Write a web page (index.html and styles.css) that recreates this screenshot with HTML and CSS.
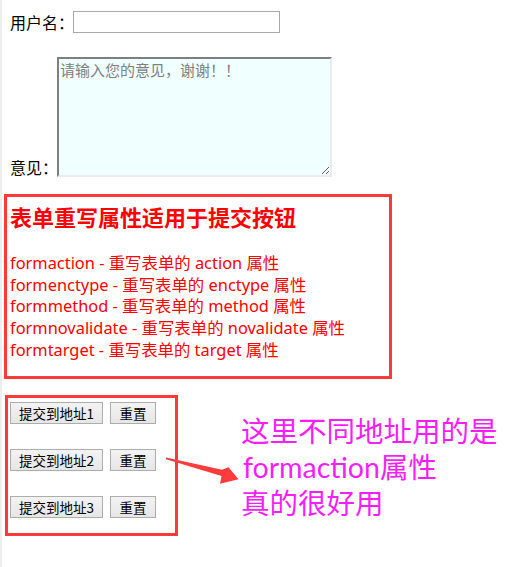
FILE: index.html
```html
<!DOCTYPE html>
<html lang="zh-CN">
<head>
<meta charset="utf-8">
<title>表单重写属性</title>
<link rel="stylesheet" href="styles.css">
</head>
<body>
<div class="page">
  <form class="form">
    <div class="row row-user">
      <label class="label label-user" for="user">用户名：</label>
      <input class="text-input" id="user" type="text">
    </div>
    <div class="row row-note">
      <label class="label label-note" for="note">意见：</label>
      <textarea class="note" id="note" placeholder="请输入您的意见，谢谢！！"></textarea>
    </div>
  </form>

  <div class="box box-info">
    <h3 class="info-title">表单重写属性适用于提交按钮</h3>
    <p class="info-line">formaction - 重写表单的 action 属性</p>
    <p class="info-line">formenctype - 重写表单的 enctype 属性</p>
    <p class="info-line">formmethod - 重写表单的 method 属性</p>
    <p class="info-line">formnovalidate - 重写表单的 novalidate 属性</p>
    <p class="info-line">formtarget - 重写表单的 target 属性</p>
  </div>

  <div class="box box-buttons">
    <div class="btn-row">
      <button class="btn btn-submit" type="button">提交到地址1</button>
      <button class="btn btn-reset" type="button">重置</button>
    </div>
    <div class="btn-row">
      <button class="btn btn-submit" type="button">提交到地址2</button>
      <button class="btn btn-reset" type="button">重置</button>
    </div>
    <div class="btn-row">
      <button class="btn btn-submit" type="button">提交到地址3</button>
      <button class="btn btn-reset" type="button">重置</button>
    </div>
  </div>

  <svg class="arrow" width="80" height="36" viewBox="160 452 80 36" aria-hidden="true">
    <polygon points="166,457.4 222,469.8 228.5,467.2 238.5,479.2 220,483.8 221.5,476 166,459.2" fill="#ff3b3b"/>
  </svg>

  <div class="note-callout">
    <div class="callout-line">这里不同地址用的是</div>
    <div class="callout-line"><span class="callout-latin">formaction</span>属性</div>
    <div class="callout-line">真的很好用</div>
  </div>
</div>
</body>
</html>
```

FILE: styles.css
```css
html, body {
  margin: 0;
  padding: 0;
  background: #ffffff;
}

body {
  font-family: "Noto Sans", "Noto Sans CJK SC", sans-serif;
  color: #000000;
}

.page {
  position: relative;
  min-height: 567px;
  box-sizing: border-box;
  border-left: 2px solid #eeeeee;
  padding-left: 2px;
  padding-top: 11px;
}

.form {
  margin: 0 0 0 6px;
}

.row {
  display: flex;
}

.row-user {
  align-items: center;
  height: 22px;
}

.row-note {
  align-items: flex-end;
  margin-top: 24px;
}

.label {
  flex: none;
  white-space: nowrap;
  font-family: "Noto Sans CJK SC", sans-serif;
  font-size: 16px;
  line-height: 20px;
  color: #000000;
}

.label-user {
  width: 63px;
}

.label-note {
  width: 47px;
}

.text-input {
  flex: none;
  box-sizing: border-box;
  width: 207px;
  height: 22px;
  margin: 0;
  padding: 1px 3px;
  border: 1px solid #a9a9a9;
  font-family: inherit;
  font-size: 14px;
  background: #ffffff;
  outline: none;
}

.note {
  flex: none;
  box-sizing: border-box;
  width: 275px;
  height: 120px;
  margin: 0;
  padding: 2px 1px;
  border-style: solid;
  border-width: 2px;
  border-color: #7f7f7f #ececec #ececec #7f7f7f;
  background: #f0ffff;
  font-family: "Noto Sans CJK SC", sans-serif;
  font-size: 15px;
  line-height: 18px;
  color: #333333;
}

.note::placeholder {
  color: #808080;
}

.box {
  box-sizing: border-box;
  border: 3px solid #fd3a3a;
}

.box-info {
  width: 388px;
  margin-top: 17px;
  padding: 5px 3px 15px 3px;
  color: #ff0000;
}

.info-title {
  margin: 0 0 22px 0;
  font-family: "Noto Sans CJK SC", sans-serif;
  font-size: 22px;
  line-height: 28px;
  font-weight: 700;
}

.info-line {
  margin: 0;
  font-size: 16.4px;
  line-height: 21.7px;
}

.box-buttons {
  width: 173px;
  margin-top: 16px;
  margin-left: 1px;
  padding: 4px 2px 15px 2px;
  display: flex;
  flex-direction: column;
  gap: 25px;
}

.btn-row {
  display: flex;
  gap: 7px;
}

.btn {
  box-sizing: border-box;
  height: 22px;
  margin: 0;
  padding: 0;
  border: 1px solid #adadad;
  border-radius: 0;
  background: linear-gradient(#f3f3f3, #e6e6e6);
  font-family: "Noto Sans CJK SC", sans-serif;
  font-size: 13.5px;
  line-height: 20px;
  color: #000000;
}

.btn-submit {
  width: 93px;
}

.btn-reset {
  width: 46px;
}

.arrow {
  position: absolute;
  left: 158px;
  top: 452px;
}

.note-callout {
  position: absolute;
  left: 239px;
  top: 412px;
  font-family: "Noto Sans CJK SC", sans-serif;
  font-size: 28.5px;
  color: #f81ef8;
  white-space: nowrap;
}

.callout-line {
  height: 36px;
  line-height: 36px;
}

.callout-latin {
  font-family: "Lato", "Noto Sans CJK SC", sans-serif;
  margin-left: 2px;
}
```
